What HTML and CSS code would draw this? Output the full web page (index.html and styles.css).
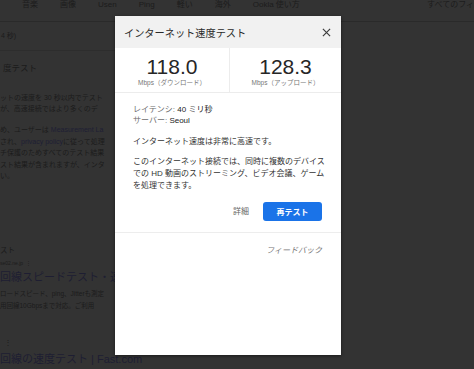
FILE: index.html
```html
<!DOCTYPE html>
<html lang="ja">
  <head>
    <meta charset="UTF-8" />
    <meta name="viewport" content="width=device-width, initial-scale=1.0" />
    <title>インターネット速度テスト</title>
    <link rel="stylesheet" href="styles.css">
  </head>
  <body>
    <div class="page">
      <nav class="topnav">
        <span>音楽</span>
        <span>画像</span>
        <span>Usen</span>
        <span>Ping</span>
        <span>軽い</span>
        <span>海外</span>
        <span>Ookla 使い方</span>
        <span class="nav-right">すべてのフィ</span>
      </nav>

      <div class="results">
        <div class="timing">4 秒)</div>
        <div class="card-head">度テスト</div>
        <p class="snippet first">ットの速度を 30 秒以内でテスト<br />が、高速接続ではより多くのデ</p>
        <p class="snippet second">め、ユーザーは <span class="link">Measurement La</span><br />され、<span class="link">privacy policy</span>に従って処理<br />チ保護のためすべてのテスト結果<br />スト結果が含まれますが、インタ<br />い。</p>

        <div class="site">スト</div>
        <div class="url">se02.ne.jp &nbsp;⋮</div>
        <div class="result-title">回線スピードテスト・速度</div>
        <p class="desc">ロードスピード、ping、Jitterも測定<br />用回線10Gbpsまで対応。ご利用</p>

        <div class="url dots">⋮</div>
        <div class="result-title last">回線の速度テスト | Fast.com</div>
      </div>
    </div>

    <div class="modal">
      <div class="modal-header">
        <span class="modal-title">インターネット速度テスト</span>
        <svg class="close" width="9" height="9" viewBox="0 0 10 10">
          <path d="M1 1 L9 9 M9 1 L1 9" stroke="#3c3c3c" stroke-width="1.3" fill="none" />
        </svg>
      </div>

      <div class="stats">
        <div class="stat">
          <div class="stat-value">118.0</div>
          <div class="stat-label">Mbps（ダウンロード）</div>
        </div>
        <div class="stat">
          <div class="stat-value">128.3</div>
          <div class="stat-label">Mbps（アップロード）</div>
        </div>
      </div>

      <div class="modal-body">
        <div class="meta"><span class="meta-key">レイテンシ:</span> 40 ミリ秒</div>
        <div class="meta"><span class="meta-key">サーバー:</span> Seoul</div>
        <p class="verdict">インターネット速度は非常に高速です。</p>
        <p class="detail">このインターネット接続では、同時に複数のデバイス<br />での HD 動画のストリーミング、ビデオ会議、ゲーム<br />を処理できます。</p>
        <div class="actions">
          <span class="more">詳細</span>
          <button type="button" class="retest">再テスト</button>
        </div>
      </div>

      <div class="modal-footer">フィードバック</div>
    </div>
  </body>
</html>
```

FILE: styles.css
```css
body {
  margin: 0;
  background-color: #333333;
  font-family: "Liberation Sans", "Noto Sans CJK JP", sans-serif;
  color: #1b1b1b;
  overflow: hidden;
  height: 369px;
}
.page {
  width: 474px;
}
.topnav {
  height: 22px;
  border-bottom: 1px solid #2a2a2a;
  display: flex;
  font-size: 8px;
  line-height: 9px;
  color: #1c1c1c;
  padding-left: 22px;
  gap: 22px;
  box-sizing: border-box;
}
.nav-right {
  margin-left: auto;
}
.results {
  white-space: nowrap;
}
.timing {
  width: 118px;
  font-size: 7px;
  line-height: 10px;
  margin-top: 9px;
  padding-bottom: 9px;
  border-bottom: 1px solid #2d2d2d;
  padding-left: 1px;
}
.card-head {
  font-size: 8.5px;
  line-height: 12px;
  margin-top: 11px;
  padding-left: 3px;
}
.snippet {
  font-size: 7px;
  line-height: 11px;
  margin: 0;
}
.snippet.first {
  margin-top: 18px;
}
.snippet.second {
  margin-top: 10px;
  line-height: 11.5px;
}
.link {
  color: #1e1e34;
}
.site {
  font-size: 7.5px;
  line-height: 10px;
  margin-top: 64px;
}
.url {
  font-size: 5px;
  line-height: 8px;
  margin-top: 3px;
}
.result-title {
  font-size: 11px;
  line-height: 14px;
  margin-top: 3px;
  color: #1e1e32;
}
.desc {
  font-size: 6.5px;
  line-height: 12px;
  margin: 4px 0 0;
}
.url.dots {
  font-size: 8px;
  line-height: 10px;
  margin-top: 26px;
  padding-left: 4px;
}
.result-title.last {
  margin-top: 4px;
}

/* dialog */
.modal {
  position: absolute;
  left: 115px;
  top: 16px;
  width: 226px;
  height: 339px;
  background-color: #ffffff;
  box-shadow: 0 1px 3px rgba(0, 0, 0, 0.5);
  display: flex;
  flex-direction: column;
  color: #222222;
}
.modal-header {
  height: 32px;
  background-color: #f1f1f1;
  display: flex;
  align-items: center;
  justify-content: space-between;
  padding: 0 10px 0 9px;
}
.modal-title {
  font-size: 10.2px;
  color: #2a2a2a;
}
.stats {
  display: grid;
  grid-template-columns: 114px 1fr;
  height: 44px;
  border-bottom: 1px solid #ececec;
}
.stat {
  text-align: center;
  padding-top: 8px;
}
.stat + .stat {
  border-left: 1px solid #ececec;
}
.stat-value {
  font-size: 21px;
  line-height: 21px;
  color: #262626;
}
.stat-label {
  font-size: 6.5px;
  line-height: 9px;
  color: #777777;
  margin-top: 1px;
}
.modal-body {
  padding: 11px 16px 0 18px;
  font-size: 8px;
  line-height: 11px;
  white-space: nowrap;
}
.meta {
  color: #222222;
}
.meta-key {
  color: #6d6d6d;
}
.verdict {
  margin: 10px 0 0;
  color: #333333;
}
.detail {
  margin: 9px 0 0;
  line-height: 12px;
  color: #333333;
}
.actions {
  display: flex;
  justify-content: flex-end;
  align-items: center;
  gap: 14px;
  margin-top: 10px;
  padding-right: 3px;
  padding-bottom: 11px;
}
.more {
  color: #666666;
}
.retest {
  width: 59px;
  height: 19px;
  border: none;
  border-radius: 3px;
  background-color: #1a73e8;
  color: #ffffff;
  font-family: inherit;
  font-size: 8px;
  font-weight: bold;
  padding: 0;
}
.modal-footer {
  border-top: 1px solid #ededed;
  text-align: right;
  padding: 12px 19px 0 0;
  font-size: 8px;
  line-height: 11px;
  color: #777777;
  font-style: italic;
}
```
